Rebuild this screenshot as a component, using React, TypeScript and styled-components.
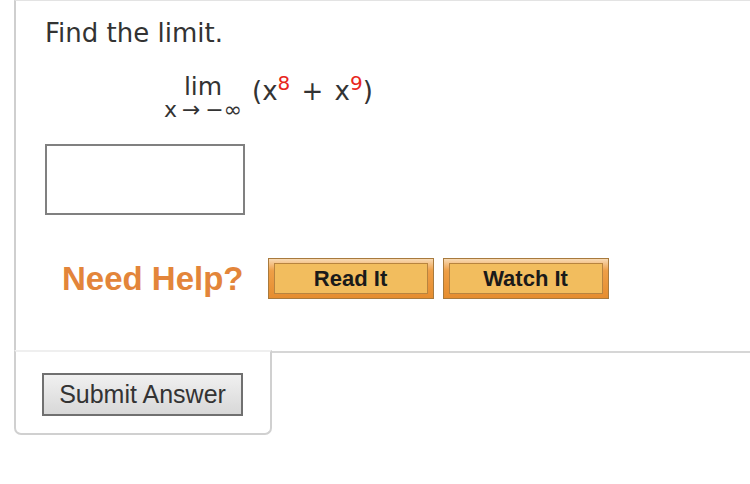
import React from "react";
import styled, { createGlobalStyle } from "styled-components";

const GlobalStyle = createGlobalStyle`
  html, body {
    margin: 0;
    padding: 0;
    background: #ffffff;
  }
  body {
    font-family: "DejaVu Sans", Verdana, sans-serif;
    color: #333333;
  }
`;

const Page = styled.div`
  width: 750px;
  box-sizing: border-box;
  padding-left: 14px;
`;

const Panel = styled.section`
  height: 350px;
  box-sizing: border-box;
  border-left: 2px solid #cfcfcf;
  border-top: 1px solid #e3e3e3;
  padding: 17px 0 0 29px;
  display: flex;
  flex-direction: column;
  align-items: flex-start;
`;

const Prompt = styled.div`
  font-family: "DejaVu Sans", Verdana, sans-serif;
  font-size: 26px;
  line-height: 30px;
  color: #333333;
`;

const LimitRow = styled.div`
  display: flex;
  align-items: flex-start;
  margin: 26px 0 0 118px;
  color: #333333;
`;

const LimitBlock = styled.div`
  display: flex;
  flex-direction: column;
  align-items: center;
  width: 80px;
`;

const LimWord = styled.span`
  font-size: 25px;
  line-height: 25px;
`;

const Under = styled.span`
  display: flex;
  gap: 5px;
  font-size: 22px;
  line-height: 21px;
  white-space: nowrap;
`;

const Expr = styled.span`
  font-size: 26px;
  line-height: 25px;
  margin: 5px 0 0 9px;
  white-space: nowrap;
`;

const Sup = styled.span`
  color: #e8261c;
  font-size: 20px;
  line-height: 0;
  vertical-align: 10px;
`;

const Op = styled.span`
  margin: 0 3px;
`;

const AnswerBox = styled.input`
  width: 200px;
  height: 71px;
  box-sizing: border-box;
  border: 2px solid #808080;
  margin: 24px 0 0 0;
  padding: 0 6px;
  font-size: 20px;
  outline: none;
  background: #ffffff;
`;

const HelpRow = styled.div`
  display: flex;
  align-items: center;
  margin: 43px 0 0 17px;
`;

const HelpLabel = styled.span`
  font-family: "Liberation Sans", Arial, sans-serif;
  font-weight: bold;
  font-size: 33px;
  line-height: 1;
  color: #e3853a;
  margin-right: 24px;
`;

const HelpButton = styled.button`
  width: 166px;
  height: 41px;
  box-sizing: border-box;
  padding: 4px 5px;
  margin: 0 9px 0 0;
  border: 1px solid #a87a3d;
  background: linear-gradient(to bottom, #f8dab4 0%, #ee9f47 30%, #e68d2f 100%);
  cursor: pointer;
`;

const HelpButtonFace = styled.span`
  display: flex;
  align-items: center;
  justify-content: center;
  height: 100%;
  box-sizing: border-box;
  border: 1px solid #b8843f;
  background: #f2bd5e;
  font-family: "Liberation Sans", Arial, sans-serif;
  font-weight: bold;
  font-size: 22px;
  color: #1a1a1a;
`;

const Footer = styled.div`
  display: flex;
  align-items: flex-start;
`;

const Tab = styled.div`
  width: 258px;
  box-sizing: border-box;
  border: 2px solid #d0d0d0;
  border-top: 2px solid #efefef;
  border-radius: 0 0 7px 7px;
  padding: 21px 0 17px 26px;
`;

const Filler = styled.div`
  flex: 1;
  margin-top: 1px;
  border-top: 2px solid #d6d6d6;
`;

const SubmitButton = styled.button`
  width: 201px;
  height: 43px;
  box-sizing: border-box;
  border: 2px solid #707070;
  background: linear-gradient(to bottom, #f0f0f0, #d8d8d8);
  font-family: "Liberation Sans", Arial, sans-serif;
  font-size: 25px;
  color: #333333;
  padding: 0;
  cursor: pointer;
`;

export default function App() {
  return (
    <>
      <GlobalStyle />
      <Page>
        <Panel>
          <Prompt>Find the limit.</Prompt>
          <LimitRow>
            <LimitBlock>
              <LimWord>lim</LimWord>
              <Under>
                <span>x</span>
                <span>→</span>
                <span>−∞</span>
              </Under>
            </LimitBlock>
            <Expr>
              (x<Sup>8</Sup>
              <Op> + </Op>x<Sup>9</Sup>)
            </Expr>
          </LimitRow>
          <AnswerBox type="text" aria-label="answer" />
          <HelpRow>
            <HelpLabel>Need Help?</HelpLabel>
            <HelpButton>
              <HelpButtonFace>Read It</HelpButtonFace>
            </HelpButton>
            <HelpButton>
              <HelpButtonFace>Watch It</HelpButtonFace>
            </HelpButton>
          </HelpRow>
        </Panel>
        <Footer>
          <Tab>
            <SubmitButton>Submit Answer</SubmitButton>
          </Tab>
          <Filler />
        </Footer>
      </Page>
    </>
  );
}
